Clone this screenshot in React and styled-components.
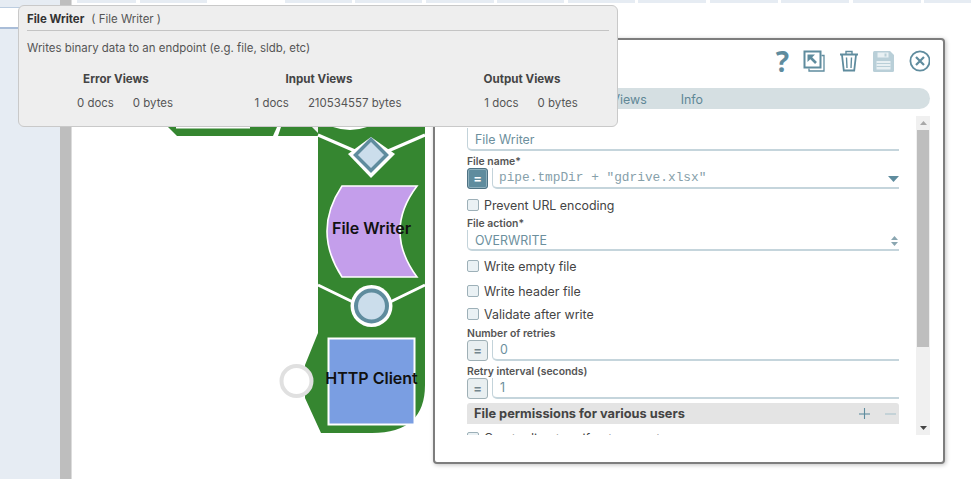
import React from "react";
import styled, { createGlobalStyle } from "styled-components";

const Global = createGlobalStyle`
  html, body { margin: 0; padding: 0; background: #fff; }
  body { font-family: Inter, "Noto Sans", sans-serif; }
`;

const Page = styled.div`
  position: relative;
  width: 971px;
  height: 479px;
  overflow: hidden;
  display: flex;
  background: #fff;
`;

const Sidebar = styled.aside`
  width: 60px;
  flex: none;
  background: #e6ecf3;
  padding-top: 7px;
  box-sizing: border-box;
`;

const SearchField = styled.div`
  width: 73px;
  height: 22px;
  box-sizing: border-box;
  background: #fff;
  border-top: 1px solid #bccde0;
  border-bottom: 2px solid #a9bdd8;
`;

const Splitter = styled.div`
  width: 12px;
  flex: none;
  box-sizing: border-box;
  background: #bebebe;
  border-right: 1px solid #dcdcdc;
`;

const Main = styled.main`
  flex: 1;
  min-width: 0;
  display: flex;
  flex-direction: column;
`;

const TabStrip = styled.div`
  height: 3px;
  flex: none;
  padding-left: 5px;
  display: flex;
  gap: 3.5px;
  overflow: hidden;
`;

const TopTab = styled.div`
  flex: none;
  width: ${(p) => p.$width}px;
  background: ${(p) => (p.$active ? "#fff" : "#e6ecf3")};
`;

const Diagram = styled.svg`
  display: block;
  flex: none;
`;

const NodeLabel = styled.text`
  font-family: Inter, sans-serif;
  font-size: 16px;
  font-weight: 600;
  fill: #111;
  text-anchor: middle;
`;

const Tooltip = styled.div`
  position: absolute;
  left: 18px;
  top: 5px;
  width: 600px;
  height: 122px;
  box-sizing: border-box;
  padding: 6px 8px 0;
  background: #eeeeee;
  border: 1px solid #c9c9c9;
  border-radius: 6px;
  color: #555;
  font-size: 11.45px;
  z-index: 3;
`;

const TipTitle = styled.div`
  height: 18px;
  line-height: 15px;
  border-bottom: 1px solid #c4c4c4;
  display: flex;
  gap: 7px;
`;

const TipName = styled.span`
  font-weight: 700;
  color: #333;
`;

const TipDesc = styled.div`
  margin-top: 10px;
  line-height: 15px;
`;

const TipStats = styled.div`
  margin-top: 16px;
  display: grid;
  grid-template-columns: 178px 228px 178px;
`;

const StatColumn = styled.div`
  display: flex;
  flex-direction: column;
  align-items: center;
  gap: 9px;
`;

const StatHead = styled.div`
  font-weight: 700;
  font-size: 11.6px;
  color: #444;
  line-height: 15px;
`;

const StatValues = styled.div`
  display: flex;
  gap: 19px;
  padding-left: 18px;
  line-height: 15px;
`;

const Dialog = styled.section`
  position: absolute;
  left: 433px;
  top: 38px;
  width: 512px;
  height: 426px;
  box-sizing: border-box;
  background: #fff;
  border: 2px solid #7d7d7d;
  border-radius: 4px;
  box-shadow: 1px 1px 4px rgba(0, 0, 0, 0.25);
  display: flex;
  flex-direction: column;
  z-index: 2;
`;

const IconBar = styled.div`
  height: 48px;
  flex: none;
  box-sizing: border-box;
  padding: 9px 7px 0 0;
  display: flex;
  justify-content: flex-end;
  align-items: flex-start;
`;

const IconSlot = styled.div`
  width: 35px;
  height: 24px;
  display: flex;
  align-items: center;
  justify-content: center;
`;

const HelpGlyph = styled.span`
  font-family: "Open Sans", sans-serif;
  font-weight: 700;
  font-size: 28px;
  line-height: 24px;
  margin-left: 8px;
  color: #5f8c9e;
`;

const TabBar = styled.nav`
  height: 21px;
  flex: none;
  box-sizing: border-box;
  padding: 1px 227px 0 0;
  margin: 0 13px 0 16px;
  border-radius: 0 11px 11px 0;
  background: #d5dfe2;
  display: flex;
  justify-content: flex-end;
  align-items: center;
  gap: 34px;
  font-size: 12.4px;
  color: #5f8796;
`;

const Body = styled.div`
  margin-top: 7px;
  height: 319px;
  flex: none;
  display: flex;
  padding: 0 13px 0 32px;
`;

const Form = styled.form`
  flex: 1;
  min-width: 0;
  margin: 0 17px 0 0;
  overflow: hidden;
`;

const Scrollbar = styled.div`
  width: 14px;
  flex: none;
  background: #f0f0f0;
  display: flex;
  flex-direction: column;
  align-items: center;
`;

const ScrollArrow = styled.div`
  height: 14px;
  flex: none;
  display: flex;
  align-items: center;
  justify-content: center;
`;

const ScrollThumb = styled.div`
  width: 12px;
  height: 217px;
  background: #bebebe;
  flex: none;
`;

const ScrollRest = styled.div`
  flex: 1;
`;

const Field = styled.div`
  margin-top: ${(p) => p.$mt || 0}px;
  height: ${(p) => p.$height || 21}px;
  box-sizing: border-box;
  flex: ${(p) => (p.$grow ? 1 : "none")};
  border-left: 1px solid #c3d3da;
  border-bottom: 2px solid #c5d5dc;
  border-bottom-left-radius: 5px;
  padding: ${(p) => (p.$grow ? 0 : 2)}px 7px 0;
  display: flex;
  align-items: center;
  justify-content: space-between;
  color: #6c8f9d;
  font-size: 12.4px;
  min-width: 0;
`;

const MonoValue = styled.span`
  font-family: "Liberation Mono", monospace;
  font-size: 12.8px;
  margin-left: -1px;
  color: #86a0aa;
  white-space: pre;
`;

const Label = styled.label`
  display: block;
  margin-top: ${(p) => p.$mt || 0}px;
  height: 14px;
  line-height: 16px;
  font-size: 10.4px;
  font-weight: 600;
  color: #555;
`;

const ExprRow = styled.div`
  display: flex;
  height: 21px;
  gap: 4px;
`;

const ExprButton = styled.button`
  width: 21px;
  height: 21px;
  flex: none;
  padding: 0;
  box-sizing: border-box;
  border-radius: 3px;
  border: 1px solid ${(p) => (p.$active ? "#4e7283" : "#9fb0b6")};
  background: ${(p) => (p.$active ? "#5f8c9e" : "#e9eff1")};
  box-shadow: ${(p) => (p.$active ? "inset 0 0 0 1px #8fb0bd" : "none")};
  color: ${(p) => (p.$active ? "#fff" : "#73858d")};
  font-family: Inter, sans-serif;
  font-weight: 600;
  font-size: 13px;
  line-height: 17px;
`;

const CheckRow = styled.label`
  display: flex;
  align-items: center;
  gap: 5px;
  height: 22px;
  margin-top: ${(p) => p.$mt || 0}px;
  font-size: 12.4px;
  color: #444;
`;

const CheckBox = styled.span`
  width: 10px;
  height: 10px;
  flex: none;
  border: 1px solid #9db0b8;
  border-radius: 2px;
  background: #eaf1f4;
`;

const SectionBar = styled.div`
  margin-top: 4px;
  height: 21px;
  box-sizing: border-box;
  background: #e4e4e4;
  border-radius: 3px 3px 0 0;
  padding: 0 7px;
  display: flex;
  align-items: center;
  justify-content: space-between;
  font-size: 12.8px;
  font-weight: 700;
  color: #444;
`;

const SectionTools = styled.div`
  display: flex;
  align-items: center;
  gap: 14px;
  margin-right: -5px;
`;

const tealStroke = "#5f8c9e";

const ExportIcon = () => (
  <svg width="22" height="22" viewBox="0 0 22 22" fill="none">
    <path d="M18.5 5.5H21V21H6V18.5" stroke={tealStroke} strokeWidth="1.3" />
    <rect x="1.5" y="1.5" width="16" height="16" stroke={tealStroke} strokeWidth="2" />
    <path d="M13 13L6.5 6.5" stroke={tealStroke} strokeWidth="2.6" />
    <path d="M4.5 4.5H12L4.5 12Z" fill={tealStroke} />
  </svg>
);

const TrashIcon = () => (
  <svg width="20" height="22" viewBox="0 0 20 22" fill="none" stroke={tealStroke}>
    <path d="M1 4.5H19" strokeWidth="2" />
    <path d="M7 4V1.5H13V4" strokeWidth="1.4" />
    <path d="M3 5L4.8 20.5H15.2L17 5" strokeWidth="1.8" />
    <path d="M7.5 7.5L8 18M12.5 7.5L12 18" strokeWidth="1.4" />
  </svg>
);

const SaveIcon = () => (
  <svg width="21" height="21" viewBox="0 0 21 21">
    <path d="M0 1.5Q0 0 1.5 0H17L21 4V19.5Q21 21 19.5 21H1.5Q0 21 0 19.5Z" fill="#b9cfd8" />
    <rect x="4.5" y="1.5" width="11" height="5" fill="#e8f0f3" />
    <rect x="11.5" y="2.5" width="2" height="3" fill="#b9cfd8" />
    <rect x="3.5" y="10" width="14" height="8.5" fill="#e8f0f3" />
    <path d="M3.5 12.5H17.5M3.5 15.5H17.5" stroke="#b9cfd8" strokeWidth="1.2" />
  </svg>
);

const CloseIcon = () => (
  <svg width="22" height="22" viewBox="0 0 22 22" fill="none" stroke={tealStroke}>
    <circle cx="12" cy="11" r="9.6" strokeWidth="1.8" />
    <path d="M8 7L16 15M16 7L8 15" strokeWidth="2.2" />
  </svg>
);

const Triangle = ({ up, color, w = 7, h = 4 }) => (
  <svg width={w} height={h} viewBox="0 0 8 4" preserveAspectRatio="none" style={{ display: "block" }}>
    <path d={up ? "M0 4L4 0L8 4Z" : "M0 0H8L4 4Z"} fill={color} />
  </svg>
);

const Stepper = styled.span`
  display: flex;
  flex-direction: column;
  gap: 2px;
  margin-right: -6px;
`;

const DropIcon = styled.span`
  margin-right: -7px;
  margin-top: 2px;
`;

const PlusMinus = ({ minus }) => (
  <svg width="12" height="12" viewBox="0 0 12 12" fill="none" stroke={minus ? "#a9c3cd" : "#5f8c9e"} strokeWidth="1.1">
    <path d="M0 6H11" />
    {!minus && <path d="M5.5 0V11" />}
  </svg>
);

const PipelineDrawing = () => (
  <Diagram width="899" height="476" viewBox="72 3 899 476">
    <path d="M168 127L177 136H273L277 127Z" fill="#358630" />
    <rect x="176" y="127" width="74" height="1.5" fill="#fff" />
    <path d="M278 136L281 127H318V136Z" fill="#358630" />
    <path d="M312 127H325L318 133Z" fill="#f2f2f2" />
    <path d="M318 127H425V385Q425 433 372 433H321L305 398V365L318 333Z" fill="#358630" />
    <path d="M333 127Q350 133 367 127Z" fill="#fff" />
    <path d="M318 135L355 151M425 135L388 151" stroke="#fff" strokeWidth="3" fill="none" />
    <path d="M318 285L355 303M425 285L388 303" stroke="#fff" strokeWidth="3" fill="none" />
    <path d="M371 137L395 154L371 178L348 154Z" fill="#fff" />
    <path d="M371 139.5L386.5 155L371 170.5L355.5 155Z" fill="#cbddeb" stroke="#5f8c9e" strokeWidth="3.5" strokeLinejoin="miter" />
    <path d="M342 186H417Q383 231 417 277H342Q312 231 342 186Z" fill="#c49eeb" stroke="#fff" strokeWidth="1.6" />
    <NodeLabel x="371.5" y="234">File Writer</NodeLabel>
    <circle cx="371.5" cy="306" r="21" fill="#fff" />
    <circle cx="371.5" cy="306" r="15.5" fill="#cbddeb" stroke="#5f8c9e" strokeWidth="4" />
    <rect x="328.5" y="338.5" width="86" height="86" fill="#7a9ee2" stroke="#fff" strokeWidth="2" />
    <circle cx="296.5" cy="381" r="15" fill="#fff" stroke="#e0e0e0" strokeWidth="4" />
    <NodeLabel x="371.5" y="384">HTTP Client</NodeLabel>
  </Diagram>
);

const ExprField = ({ active, label, mt, children }) => (
  <>
    <Label $mt={mt}>{label}</Label>
    <ExprRow>
      <ExprButton type="button" $active={active}>=</ExprButton>
      <Field $grow>{children}</Field>
    </ExprRow>
  </>
);

const stats = [
  { head: "Error Views", docs: "0 docs", bytes: "0 bytes" },
  { head: "Input Views", docs: "1 docs", bytes: "210534557 bytes" },
  { head: "Output Views", docs: "1 docs", bytes: "0 bytes" },
];

const topTabs = [59, 67, 71, 67, 67, 68, 67, 67, 68, 68, 68, 68, 68, 68];

export default function App() {
  return (
    <>
      <Global />
      <Page>
        <Sidebar>
          <SearchField />
        </Sidebar>
        <Splitter />
        <Main>
          <TabStrip>
            {topTabs.map((w, i) => (
              <TopTab key={i} $width={w} $active={i === 2} />
            ))}
          </TabStrip>
          <PipelineDrawing />
        </Main>

        <Tooltip>
          <TipTitle>
            <TipName>File Writer</TipName>
            <span>( File Writer )</span>
          </TipTitle>
          <TipDesc>Writes binary data to an endpoint (e.g. file, sldb, etc)</TipDesc>
          <TipStats>
            {stats.map((s) => (
              <StatColumn key={s.head}>
                <StatHead>{s.head}</StatHead>
                <StatValues>
                  <span>{s.docs}</span>
                  <span>{s.bytes}</span>
                </StatValues>
              </StatColumn>
            ))}
          </TipStats>
        </Tooltip>

        <Dialog>
          <IconBar>
            <IconSlot><HelpGlyph>?</HelpGlyph></IconSlot>
            <IconSlot><ExportIcon /></IconSlot>
            <IconSlot><TrashIcon /></IconSlot>
            <IconSlot><SaveIcon /></IconSlot>
            <IconSlot><CloseIcon /></IconSlot>
          </IconBar>
          <TabBar>
            <span>Views</span>
            <span>Info</span>
          </TabBar>
          <Body>
            <Form>
              <Field $mt={12} $height={23}>File Writer</Field>
              <ExprField active label="File name*" mt={3}>
                <MonoValue>pipe.tmpDir + "gdrive.xlsx"</MonoValue>
                <DropIcon><Triangle color="#5f8c9e" w={11} h={6} /></DropIcon>
              </ExprField>
              <CheckRow $mt={5}><CheckBox />Prevent URL encoding</CheckRow>
              <Label>File action*</Label>
              <Field>
                OVERWRITE
                <Stepper>
                  <Triangle up color="#8aa6b1" />
                  <Triangle color="#8aa6b1" />
                </Stepper>
              </Field>
              <CheckRow $mt={4}><CheckBox />Write empty file</CheckRow>
              <CheckRow $mt={3}><CheckBox />Write header file</CheckRow>
              <CheckRow $mt={1}><CheckBox />Validate after write</CheckRow>
              <ExprField label="Number of retries" mt={1}>0</ExprField>
              <ExprField label="Retry interval (seconds)" mt={3}>1</ExprField>
              <SectionBar>
                File permissions for various users
                <SectionTools>
                  <PlusMinus />
                  <PlusMinus minus />
                </SectionTools>
              </SectionBar>
              <CheckRow $mt={3}><CheckBox />Create directory if not present</CheckRow>
            </Form>
            <Scrollbar>
              <ScrollArrow><Triangle up color="#a8a8a8" /></ScrollArrow>
              <ScrollThumb />
              <ScrollRest />
              <ScrollArrow><Triangle color="#444" /></ScrollArrow>
            </Scrollbar>
          </Body>
        </Dialog>
      </Page>
    </>
  );
}
